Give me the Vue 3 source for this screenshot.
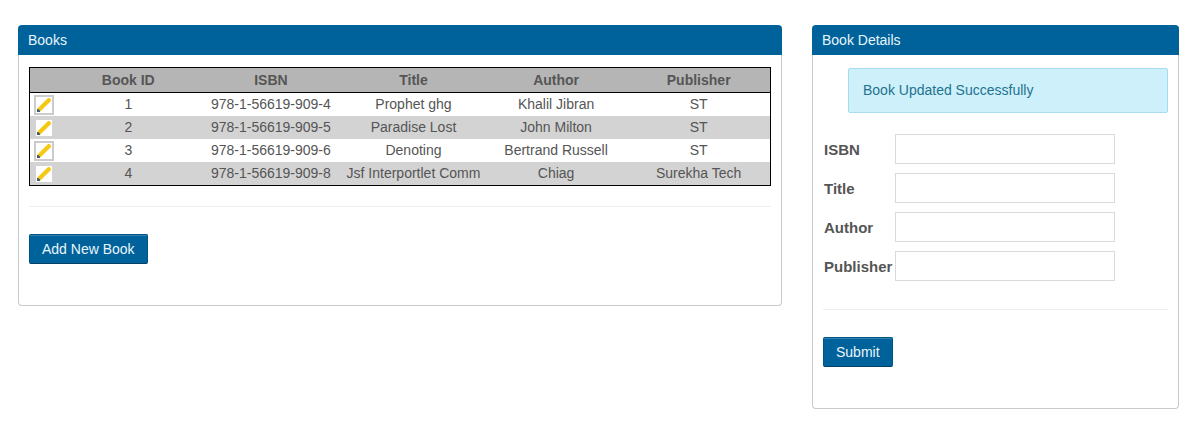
<script setup>
import { reactive, ref } from 'vue'

const columns = ['Book ID', 'ISBN', 'Title', 'Author', 'Publisher']

const books = ref([
  { id: 1, isbn: '978-1-56619-909-4', title: 'Prophet ghg', author: 'Khalil Jibran', publisher: 'ST' },
  { id: 2, isbn: '978-1-56619-909-5', title: 'Paradise Lost', author: 'John Milton', publisher: 'ST' },
  { id: 3, isbn: '978-1-56619-909-6', title: 'Denoting', author: 'Bertrand Russell', publisher: 'ST' },
  { id: 4, isbn: '978-1-56619-909-8', title: 'Jsf Interportlet Comm', author: 'Chiag', publisher: 'Surekha Tech' },
])

const fields = [
  { key: 'isbn', label: 'ISBN' },
  { key: 'title', label: 'Title' },
  { key: 'author', label: 'Author' },
  { key: 'publisher', label: 'Publisher' },
]

const form = reactive({ isbn: '', title: '', author: '', publisher: '' })
</script>

<template>
  <main class="page">
    <section class="panel">
      <h2 class="panel-title">Books</h2>
      <div class="panel-body">
        <table class="books">
          <thead>
            <tr>
              <th class="edit-cell"></th>
              <th v-for="c in columns" :key="c">{{ c }}</th>
            </tr>
          </thead>
          <tbody>
            <tr v-for="b in books" :key="b.id">
              <td class="edit-cell">
                <button type="button" class="edit">
                  <svg viewBox="0 0 16 16" width="16" height="16" aria-hidden="true">
                    <path d="M1.4 11.6 L12 1 H13.5 L15 2.5 V4 L4.4 14.6 Z" fill="#f5c913" />
                    <path d="M1 12 H2.4 L4 13.6 V15 H1 Z" fill="#45606a" />
                  </svg>
                </button>
              </td>
              <td>{{ b.id }}</td>
              <td>{{ b.isbn }}</td>
              <td>{{ b.title }}</td>
              <td>{{ b.author }}</td>
              <td>{{ b.publisher }}</td>
            </tr>
          </tbody>
        </table>
        <hr class="rule" />
        <button type="button" class="btn">Add New Book</button>
      </div>
    </section>

    <section class="panel">
      <h2 class="panel-title">Book Details</h2>
      <form class="panel-body" @submit.prevent>
        <div class="alert" role="status">Book Updated Successfully</div>
        <div class="fields">
          <template v-for="f in fields" :key="f.key">
            <label :for="f.key">{{ f.label }}</label>
            <input :id="f.key" v-model="form[f.key]" type="text" />
          </template>
        </div>
        <hr class="rule" />
        <button type="submit" class="btn">Submit</button>
      </form>
    </section>
  </main>
</template>

<style>
body {
  background: #fff;
}
</style>

<style scoped>
.page,
.page * {
  box-sizing: border-box;
}

.page {
  display: grid;
  grid-template-columns: 764fr 367fr;
  align-items: start;
  gap: 30px;
  padding: 25px 25px 25px 18px;
  font: 14px/20px "Liberation Sans", Arial, sans-serif;
  color: #555;
}

.panel {
  min-width: 0;
  border: 1px solid #c8c9ca;
  border-top: 0;
  border-radius: 4px;
}

.panel-title {
  margin: 0 -1px;
  padding: 5px 10px;
  background: #00629b;
  border-radius: 4px 4px 0 0;
  color: #e9f6fb;
  font-size: 14px;
  font-weight: 400;
}

.panel-body {
  padding: 12px 10px 41px;
}

.books {
  width: 100%;
  table-layout: fixed;
  border: 1px solid #000;
  border-spacing: 0;
  text-align: center;
}

.books th {
  height: 25px;
  padding: 0;
  background: #b5b5b5;
  border-bottom: 1px solid #000;
}

.books td {
  height: 23px;
  padding: 1px 0 2px;
  vertical-align: top;
}

.books tbody tr:nth-child(even) {
  background: #d3d3d3;
}

.books th.edit-cell {
  width: 27px;
}

.books td.edit-cell {
  padding: 2px 0 1px 4px;
}

.edit {
  display: block;
  width: 20px;
  height: 20px;
  padding: 0;
  border: 2px solid #ccc;
  background: #fff;
  cursor: pointer;
}

tr:nth-child(even) .edit {
  border-color: #d3d3d3;
}

.edit svg {
  display: block;
}

.rule {
  height: 1px;
  margin: 20px 0 27px;
  border: 0;
  background: #eee;
}

.btn {
  display: block;
  height: 30px;
  padding: 0 12px;
  background: #00629b;
  border: 1px solid #005587;
  border-bottom-color: #003f66;
  border-radius: 2px;
  box-shadow: inset 0 1px 0 #3381af;
  color: #e9f6fb;
  font: inherit;
  cursor: pointer;
}

.alert {
  margin: 1px 0 21px 25px;
  padding: 11px 14px 12px;
  background: #cdf0fa;
  border: 1px solid #a6dcee;
  border-radius: 2px;
  color: #1f7390;
}

.fields {
  display: grid;
  grid-template-columns: 70px minmax(0, 220px);
  align-items: center;
  gap: 9px 1px;
  margin: 0 1px 28px;
}

.fields label {
  padding-top: 2px;
  font-size: 15px;
  font-weight: 700;
}

.fields input {
  width: 100%;
  height: 30px;
  padding: 4px 6px;
  background: #fff;
  border: 1px solid #d9dadb;
  color: inherit;
  font: inherit;
}
</style>
